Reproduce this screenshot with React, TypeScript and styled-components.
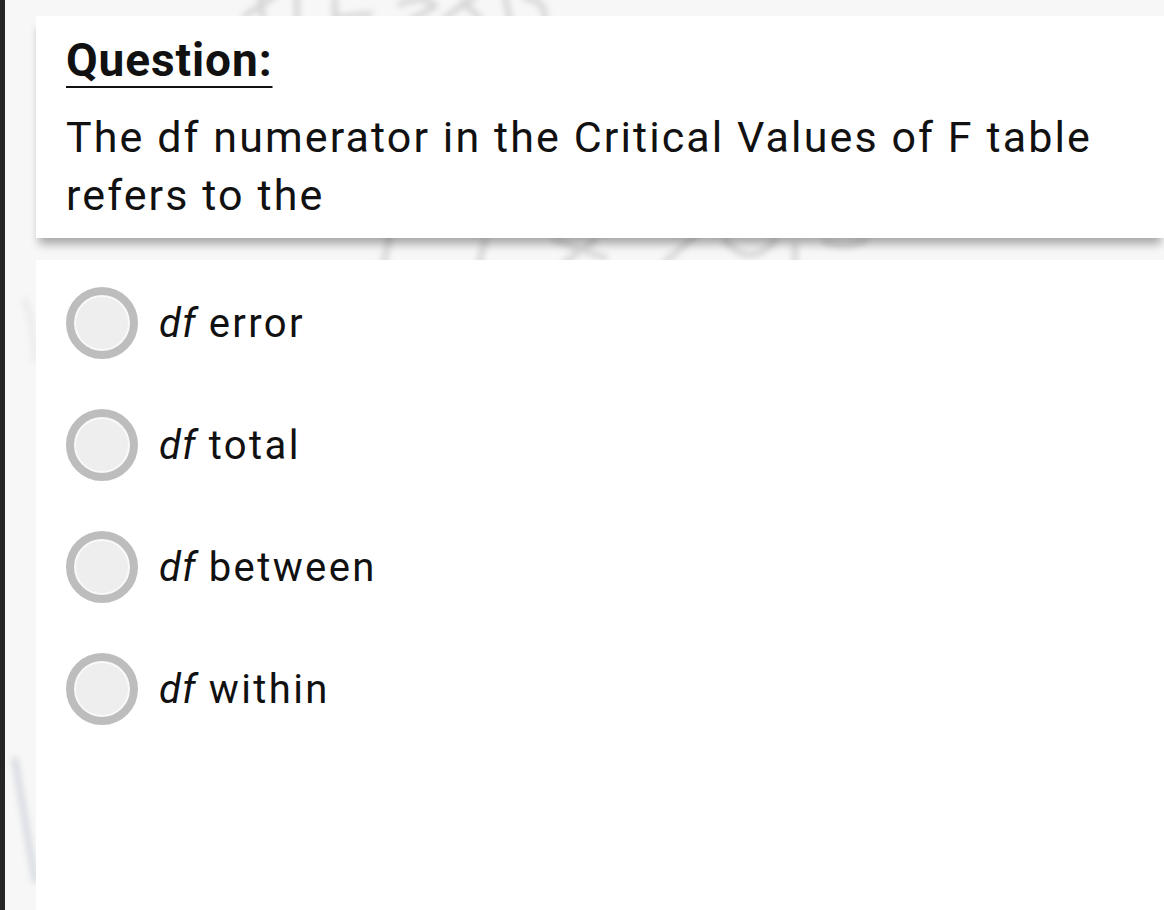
import React from "react";
import styled, { createGlobalStyle } from "styled-components";

const GlobalStyle = createGlobalStyle`
  html, body { margin: 0; padding: 0; }
  body {
    background: #f7f7f7;
    font-family: "Roboto", "Liberation Sans", Arial, sans-serif;
    color: #111;
    -webkit-font-smoothing: antialiased;
  }
`;

const Page = styled.div`
  display: flex;
  width: 1164px;
  height: 910px;
  overflow: hidden;
`;

const SideBar = styled.div`
  width: 5px;
  flex: 0 0 5px;
  background: #252525;
`;

const Stage = styled.div`
  position: relative;
  flex: 1;
  display: flex;
  flex-direction: column;
  padding: 16px 0 0 31px;
  background: #f7f7f7;
`;

const Sketch = styled.svg`
  position: absolute;
  inset: 0;
  width: 100%;
  height: 100%;
  pointer-events: none;
`;

const QuestionCard = styled.section`
  position: relative;
  z-index: 1;
  height: 222px;
  box-sizing: border-box;
  padding: 16px 30px 0 30px;
  background: #ffffff;
  box-shadow: 0 9px 9px -3px rgba(0, 0, 0, 0.33);
`;

const Heading = styled.h2`
  margin: 0;
  display: inline-block;
  font-size: 46px;
  line-height: 56px;
  font-weight: 700;
  letter-spacing: 0.9px;
  text-decoration: underline;
  text-decoration-thickness: 2px;
  text-underline-offset: 10px;
`;

const Prompt = styled.p`
  margin: 20px 0 0 0;
  font-size: 43px;
  line-height: 58px;
  font-weight: 400;
  letter-spacing: 2.1px;
  color: #111;
`;

const OptionsPanel = styled.div`
  position: relative;
  z-index: 1;
  flex: 1;
  margin-top: 22px;
  background: #ffffff;
  display: flex;
  flex-direction: column;
  gap: 50px;
  padding: 27px 30px 0 30px;
`;

const OptionRow = styled.label`
  display: flex;
  align-items: center;
  gap: 21px;
  height: 72px;
  cursor: pointer;
`;

const Radio = styled.span`
  box-sizing: border-box;
  width: 72px;
  height: 72px;
  flex: 0 0 72px;
  border-radius: 50%;
  border: 8px solid #bdbdbd;
  background: #eeeeee;
  box-shadow: inset 0 0 0 2px #f9f9f9;
`;

const OptionText = styled.span`
  font-size: 40px;
  line-height: 48px;
  letter-spacing: 2.4px;
  color: #111;
  margin-top: 2px;
`;

const Term = styled.em`
  font-style: italic;
  letter-spacing: 1px;
`;

const options = ["error", "total", "between", "within"];

export default function App() {
  return (
    <>
      <GlobalStyle />
      <Page>
        <SideBar />
        <Stage>
          <Sketch viewBox="0 0 1159 910" preserveAspectRatio="none">
            <defs>
              <filter id="blur" x="-10%" y="-10%" width="120%" height="120%">
                <feGaussianBlur stdDeviation="3" />
              </filter>
            </defs>
            <g
              filter="url(#blur)"
              stroke="#d6d6d6"
              strokeWidth="6"
              fill="none"
              strokeLinecap="round"
            >
              <path d="M240 16 L270 -4 M255 -4 L258 18" />
              <path d="M292 -6 L292 18 M330 0 L330 18 L365 14" />
              <path d="M395 4 Q420 -6 430 6 Q418 14 405 20" />
              <path d="M440 18 L470 -4 M458 2 L475 18" />
              <path d="M500 -4 L505 20 M520 -2 Q540 0 540 18" />
              <path d="M375 280 L385 235 M470 280 L480 240" />
              <path d="M550 240 L600 258 M590 240 L560 262" />
              <path d="M660 262 L690 236" />
              <path d="M720 240 Q745 270 770 240 M790 245 L790 262 M820 242 Q840 250 860 240" />
              <path d="M10 760 L30 880" stroke="#d3d8de" />
              <path d="M20 300 Q30 330 30 360" stroke="#ebebeb" />
            </g>
          </Sketch>
          <QuestionCard>
            <Heading>Question:</Heading>
            <Prompt>
              The df numerator in the Critical Values of F table refers to the
            </Prompt>
          </QuestionCard>
          <OptionsPanel>
            {options.map((o) => (
              <OptionRow key={o}>
                <Radio />
                <OptionText>
                  <Term>df</Term> {o}
                </OptionText>
              </OptionRow>
            ))}
          </OptionsPanel>
        </Stage>
      </Page>
    </>
  );
}
